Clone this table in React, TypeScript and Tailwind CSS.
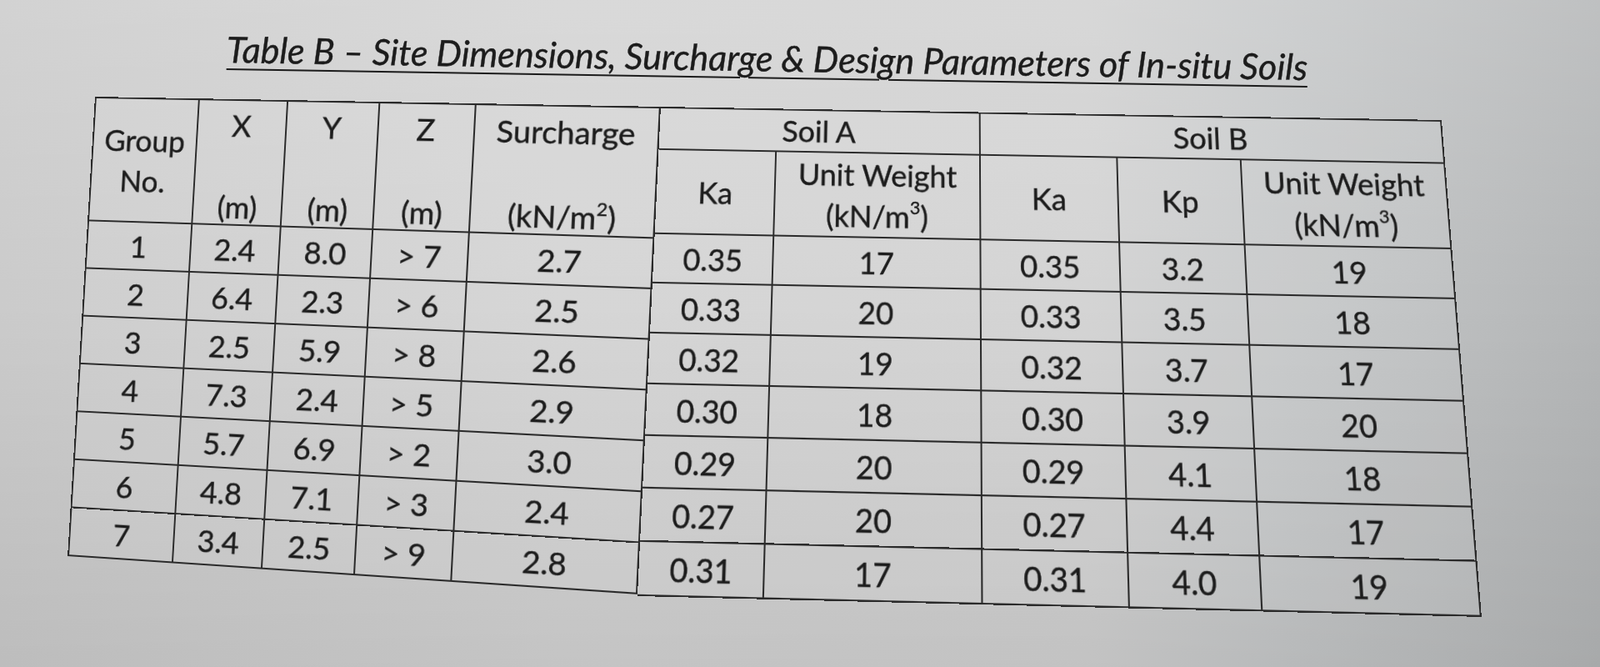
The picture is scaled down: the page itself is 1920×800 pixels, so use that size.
import { useLayoutEffect, useRef, useState, type ReactNode } from "react";

// photo of a printed (slightly curved) table: the flat table is laid out in two
// halves, and each half is warped onto corners measured in the reference
const leftCorners = [
  [114, 116],
  [793, 128],
  [765, 715],
  [81, 669],
];
const rightCorners = [
  [793, 128],
  [1730, 144],
  [1778, 740],
  [765, 715],
];

const rows = [
  ["1", "2.4", "8.0", "> 7", "2.7", "0.35", "17", "0.35", "3.2", "19"],
  ["2", "6.4", "2.3", "> 6", "2.5", "0.33", "20", "0.33", "3.5", "18"],
  ["3", "2.5", "5.9", "> 8", "2.6", "0.32", "19", "0.32", "3.7", "17"],
  ["4", "7.3", "2.4", "> 5", "2.9", "0.30", "18", "0.30", "3.9", "20"],
  ["5", "5.7", "6.9", "> 2", "3.0", "0.29", "20", "0.29", "4.1", "18"],
  ["6", "4.8", "7.1", "> 3", "2.4", "0.27", "20", "0.27", "4.4", "17"],
  ["7", "3.4", "2.5", "> 9", "2.8", "0.31", "17", "0.31", "4.0", "19"],
];

function homography(src: number[][], dst: number[][]) {
  const A: number[][] = [];
  const b: number[] = [];
  for (let i = 0; i < 4; i++) {
    const [x, y] = src[i];
    const [u, v] = dst[i];
    A.push([x, y, 1, 0, 0, 0, -x * u, -y * u]);
    b.push(u);
    A.push([0, 0, 0, x, y, 1, -x * v, -y * v]);
    b.push(v);
  }
  const n = 8;
  for (let c = 0; c < n; c++) {
    let p = c;
    for (let r = c + 1; r < n; r++) if (Math.abs(A[r][c]) > Math.abs(A[p][c])) p = r;
    [A[c], A[p]] = [A[p], A[c]];
    [b[c], b[p]] = [b[p], b[c]];
    for (let r = 0; r < n; r++) {
      if (r === c) continue;
      const f = A[r][c] / A[c][c];
      for (let k = c; k < n; k++) A[r][k] -= f * A[c][k];
      b[r] -= f * b[c];
    }
  }
  const [a, bb, c, d, e, f, g, h] = b.map((v, i) => v / A[i][i]);
  return `matrix3d(${a},${d},0,${g},${bb},${e},0,${h},0,0,1,0,${c},${f},0,1)`;
}

function Warp({ corners, children }: { corners: number[][]; children: ReactNode }) {
  const ref = useRef<HTMLDivElement>(null);
  const [transform, setTransform] = useState<string | undefined>();

  useLayoutEffect(() => {
    const el = ref.current;
    if (!el) return;
    const box = el.getBoundingClientRect();
    const w = el.offsetWidth;
    const h = el.offsetHeight;
    setTransform(
      homography(
        [
          [0, 0],
          [w, 0],
          [w, h],
          [0, h],
        ],
        corners.map(([x, y]) => [x - box.left, y - box.top]),
      ),
    );
  }, [corners]);

  return (
    <div ref={ref} className="w-max shrink-0 origin-top-left" style={{ transform }}>
      {children}
    </div>
  );
}

const cell = "border-2 border-[#2a2a2a] text-center align-middle font-normal";
const tableCls = "table-fixed border-collapse bg-white/[0.07] text-[37px] leading-[46px]";

function Sup({ n }: { n: string }) {
  return <sup className="text-[22px] top-[-0.75em]">{n}</sup>;
}

function TwoLine({ top, bottom }: { top: string; bottom: ReactNode }) {
  return (
    <div className="flex h-[151px] flex-col justify-between pt-[12px] pb-[3px] leading-[36px]">
      <span>{top}</span>
      <span>{bottom}</span>
    </div>
  );
}

export default function App() {
  return (
    <div className="h-[800px] w-full overflow-hidden bg-[linear-gradient(180deg,rgba(255,255,255,0.14)_0%,rgba(255,255,255,0)_45%,rgba(0,0,0,0.07)_100%),linear-gradient(90deg,#cbcbcb_0%,#d3d3d3_35%,#d1d1d1_68%,#c6c8c9_80%,#b4b6b7_100%)] text-[#1c1c1c] [font-family:Lato,'Open_Sans',sans-serif] [-webkit-text-stroke:0.4px_#1c1c1c]">
      <div className="blur-[0.3px]">
        <div className="pt-[36px]">
          <p className="ml-[272px] h-[46px] w-max origin-left rotate-[0.93deg] text-[43px] leading-[46px] italic underline decoration-2 underline-offset-[7px]">
            Table B – Site Dimensions, Surcharge &amp; Design Parameters of In-situ Soils
          </p>
        </div>

        <div className="mt-[40px] flex">
          <Warp corners={leftCorners}>
            <table className={`${tableCls} border-2 border-[#2a2a2a]`}>
              <colgroup>
                <col className="w-[131px]" />
                <col className="w-[110px]" />
                <col className="w-[112px]" />
                <col className="w-[115px]" />
                <col className="w-[214px]" />
              </colgroup>
              <thead>
                <tr className="h-[151px]">
                  <th className={`${cell} leading-[50px]`}>
                    Group
                    <br />
                    No.
                  </th>
                  {["X", "Y", "Z"].map((k) => (
                    <th key={k} className={`${cell} align-top`}>
                      <TwoLine top={k} bottom="(m)" />
                    </th>
                  ))}
                  <th className={`${cell} align-top`}>
                    <TwoLine
                      top="Surcharge"
                      bottom={
                        <>
                          (kN/m<Sup n="2" />)
                        </>
                      }
                    />
                  </th>
                </tr>
              </thead>
              <tbody>
                {rows.map((r) => (
                  <tr key={r[0]} className="h-[59px]">
                    {r.slice(0, 5).map((v, i) => (
                      <td key={i} className={cell}>
                        {v}
                      </td>
                    ))}
                  </tr>
                ))}
              </tbody>
            </table>
          </Warp>

          <Warp corners={rightCorners}>
            <table className={`${tableCls} border-y-2 border-r-2 border-l-0 border-[#2a2a2a]`}>
              <colgroup>
                <col className="w-[146px]" />
                <col className="w-[253px]" />
                <col className="w-[169px]" />
                <col className="w-[152px]" />
                <col className="w-[249px]" />
              </colgroup>
              <thead>
                <tr className="h-[52px]">
                  <th colSpan={2} className={`${cell} border-l-0`}>
                    Soil A
                  </th>
                  <th colSpan={3} className={cell}>
                    Soil B
                  </th>
                </tr>
                <tr className="h-[103px]">
                  <th className={`${cell} border-l-0`}>Ka</th>
                  <th className={`${cell} leading-[50px]`}>
                    Unit Weight
                    <br />
                    (kN/m<Sup n="3" />)
                  </th>
                  <th className={cell}>Ka</th>
                  <th className={cell}>Kp</th>
                  <th className={`${cell} leading-[50px]`}>
                    Unit Weight
                    <br />
                    (kN/m<Sup n="3" />)
                  </th>
                </tr>
              </thead>
              <tbody>
                {rows.map((r) => (
                  <tr key={r[0]} className="h-[59px]">
                    {r.slice(5).map((v, i) => (
                      <td key={i} className={i === 0 ? `${cell} border-l-0` : cell}>
                        {v}
                      </td>
                    ))}
                  </tr>
                ))}
              </tbody>
            </table>
          </Warp>
        </div>
      </div>
    </div>
  );
}
